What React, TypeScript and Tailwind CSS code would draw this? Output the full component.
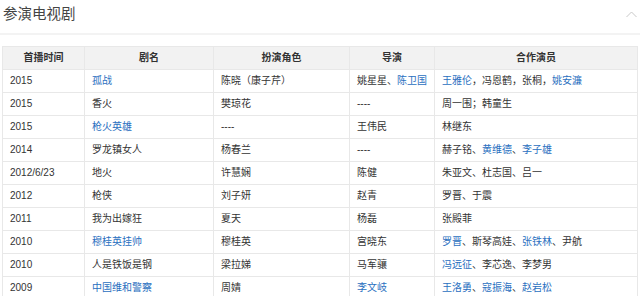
import React from "react";

type Part = { t: string; l?: boolean };
type Row = [string, Part[], string, Part[], Part[]];

const P = (t: string, l = false): Part => ({ t, l });

const rows: Row[] = [
  ["2015", [P("孤战", true)], "陈晓（康子芹）", [P("姚星星、"), P("陈卫国", true)], [P("王雅伦", true), P("，冯恩鹤，张桐，"), P("姚安濂", true)]],
  ["2015", [P("香火")], "樊琼花", [P("----")], [P("周一围；韩童生")]],
  ["2015", [P("枪火英雄", true)], "----", [P("王伟民")], [P("林继东")]],
  ["2014", [P("罗龙镇女人")], "杨春兰", [P("----")], [P("赫子铭、"), P("黄维德", true), P("、"), P("李子雄", true)]],
  ["2012/6/23", [P("地火")], "许慧娴", [P("陈健")], [P("朱亚文、杜志国、吕一")]],
  ["2012", [P("枪侠")], "刘子妍", [P("赵青")], [P("罗晋、于震")]],
  ["2011", [P("我为出嫁狂")], "夏天", [P("杨磊")], [P("张殿菲")]],
  ["2010", [P("穆桂英挂帅", true)], "穆桂英", [P("宫晓东")], [P("罗晋", true), P("、斯琴高娃、"), P("张铁林", true), P("、尹航")]],
  ["2010", [P("人是铁饭是钢")], "梁拉娣", [P("马军骧")], [P("冯远征", true), P("、李芯逸、李梦男")]],
  ["2009", [P("中国维和警察", true)], "周婧", [P("李文岐", true)], [P("王洛勇", true), P("、"), P("寇振海", true), P("、"), P("赵岩松", true)]],
];

function Parts({ parts }: { parts: Part[] }) {
  return (
    <>
      {parts.map((p, i) =>
        p.l ? (
          <span key={i} className="text-[#2a6fc0]">{p.t}</span>
        ) : (
          <span key={i}>{p.t}</span>
        )
      )}
    </>
  );
}

export default function App() {
  const td = "border border-[#e8e8e8] h-[23px] px-[7px] py-0 whitespace-nowrap overflow-hidden";
  const th = "border border-[#e8e8e8] h-[23px] px-[7px] py-0 font-bold text-center text-[#333]";
  return (
    <div
      className="w-[640px] h-[296px] overflow-hidden bg-white text-[#333]"
      style={{ fontFamily: '"Liberation Sans", "Noto Sans CJK SC", sans-serif' }}
    >
      <div className="flex items-center justify-between pl-[3px] pr-[3px] h-[28px]">
        <div className="text-[14.5px] leading-[18px] text-[#444]">参演电视剧</div>
        <svg width="11" height="7" viewBox="0 0 11 7">
          <path d="M0.5 6 L5.5 1 L10.5 6" fill="none" stroke="#c8c8c8" strokeWidth="1" />
        </svg>
      </div>
      <div className="mt-[5px] h-[2px] bg-[#f3f3f3]" />
      <div className="pl-[2px] pt-[11px]">
        <table className="border-collapse table-fixed text-[10px] leading-[12px]" style={{ width: 635 }}>
          <colgroup>
            <col style={{ width: 82 }} />
            <col style={{ width: 129 }} />
            <col style={{ width: 136 }} />
            <col style={{ width: 85 }} />
            <col style={{ width: 203 }} />
          </colgroup>
          <thead>
            <tr className="bg-[#f2f2f2]">
              <th className={th}>首播时间</th>
              <th className={th}>剧名</th>
              <th className={th}>扮演角色</th>
              <th className={th}>导演</th>
              <th className={th}>合作演员</th>
            </tr>
          </thead>
          <tbody>
            {rows.map((r, i) => (
              <tr key={i}>
                <td className={td}>{r[0]}</td>
                <td className={td}><Parts parts={r[1]} /></td>
                <td className={td}>{r[2]}</td>
                <td className={td}><Parts parts={r[3]} /></td>
                <td className={td}><Parts parts={r[4]} /></td>
              </tr>
            ))}
          </tbody>
        </table>
      </div>
    </div>
  );
}
